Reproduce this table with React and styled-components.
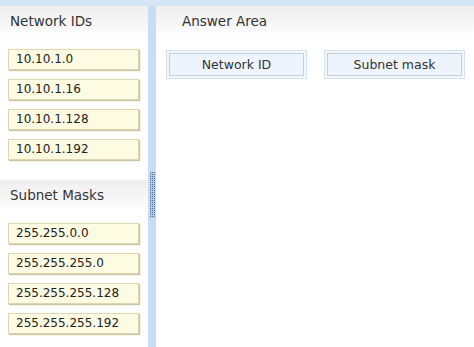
import React from "react";
import styled, {createGlobalStyle} from "styled-components";

const Global = createGlobalStyle`
  html, body {
    margin: 0;
    padding: 0;
    background: #ffffff;
  }
  body {
    font-family: "DejaVu Sans", Verdana, sans-serif;
    color: #333333;
  }
`;

const Frame = styled.div`
  width: 474px;
  height: 347px;
  box-sizing: border-box;
  border-top: 6px solid #d3e5f6;
  display: flex;
  background: #ffffff;
  overflow: hidden;
`;

const LeftPane = styled.div`
  width: 148px;
  display: flex;
  flex-direction: column;
`;

const Splitter = styled.div`
  width: 8px;
  background: #c9def4;
  display: flex;
  flex-direction: column;
  align-items: center;
  padding-top: 166px;
`;

const Grip = styled.div`
  width: 5px;
  height: 46px;
  background-color: #4f6f94;
  background-image:
    repeating-linear-gradient(to right, transparent 0 1px, #b4cbe4 1px 2px),
    repeating-linear-gradient(to bottom, transparent 0 1px, #b4cbe4 1px 2px);
`;

const RightPane = styled.div`
  flex: 1;
  display: flex;
  flex-direction: column;
`;

const Header = styled.div`
  height: 30px;
  display: flex;
  align-items: center;
  padding-left: ${p => p.$indent}px;
  font-size: 13.5px;
  color: #333;
  background: linear-gradient(to bottom, #efefef 0%, #f6f6f6 60%, #ffffff 100%);
  margin-top: ${p => p.$top || 0}px;
`;

const List = styled.div`
  display: flex;
  flex-direction: column;
  gap: 9px;
  padding: 13px 0 0 8px;
`;

const Item = styled.div`
  width: 131px;
  height: 21px;
  box-sizing: border-box;
  background: #fdfbe2;
  border: 1px solid #ddd6b0;
  box-shadow: 1px 1px 1px #c9c3a0;
  font-size: 12px;
  line-height: 19px;
  padding-left: 7px;
  color: #222;
`;

const Targets = styled.div`
  display: flex;
  gap: 17px;
  padding: 14px 0 0 10px;
`;

const Target = styled.div`
  width: 141px;
  height: 29px;
  box-sizing: border-box;
  border: 1px solid #d6e1ee;
  padding: 2px;
  background: #f3f7fc;
`;

const TargetInner = styled.div`
  height: 100%;
  box-sizing: border-box;
  border: 1px solid #c3d0e0;
  background: #eef4fb;
  display: flex;
  align-items: center;
  justify-content: center;
  font-size: 12.5px;
  color: #333;
`;

const networkIds = ["10.10.1.0", "10.10.1.16", "10.10.1.128", "10.10.1.192"];
const subnetMasks = ["255.255.0.0", "255.255.255.0", "255.255.255.128", "255.255.255.192"];

const App = () => (
    <>
        <Global/>
        <Frame>
            <LeftPane>
                <Header $indent={10}>Network IDs</Header>
                <List>
                    {networkIds.map(id => <Item key={id}>{id}</Item>)}
                </List>
                <Header $indent={10} $top={20}>Subnet Masks</Header>
                <List>
                    {subnetMasks.map(m => <Item key={m}>{m}</Item>)}
                </List>
            </LeftPane>
            <Splitter>
                <Grip/>
            </Splitter>
            <RightPane>
                <Header $indent={26}>Answer Area</Header>
                <Targets>
                    <Target><TargetInner>Network ID</TargetInner></Target>
                    <Target><TargetInner>Subnet mask</TargetInner></Target>
                </Targets>
            </RightPane>
        </Frame>
    </>
);

export default App;
